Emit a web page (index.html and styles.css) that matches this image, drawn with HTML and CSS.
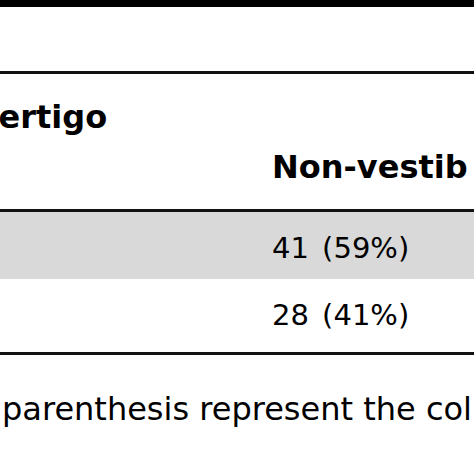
FILE: index.html
```html
<!DOCTYPE html>
<html lang="en">
<head>
    <meta charset="UTF-8">
    <meta name="viewport" content="width=device-width, initial-scale=1.0">
    <title>Table</title>
    <link rel="stylesheet" href="styles.css">
</head>
<body>
    <div class="tbl">
        <div class="tbl-top"></div>
        <div class="tbl-caption"></div>
        <div class="tbl-rule"></div>
        <div class="tbl-head">
            <div class="tbl-group">ertigo</div>
            <div class="tbl-row">
                <div class="tbl-label"></div>
                <div class="tbl-col">Non-vestib</div>
            </div>
        </div>
        <div class="tbl-rule"></div>
        <div class="tbl-row tbl-shaded">
            <div class="tbl-label"></div>
            <div class="tbl-cell">41 (59%)</div>
        </div>
        <div class="tbl-row tbl-plain">
            <div class="tbl-label"></div>
            <div class="tbl-cell">28 (41%)</div>
        </div>
        <div class="tbl-rule"></div>
        <div class="tbl-note">parenthesis represent the col</div>
    </div>
</body>
</html>
```

FILE: styles.css
```css
body {
    margin: 0;
    background: #fff;
    font-family: "DejaVu Sans", "Open Sans", sans-serif;
    color: #000;
}

.tbl {
    width: 474px;
    height: 474px;
    overflow: hidden;
}

.tbl-top {
    height: 7px;
    background: #000;
}

.tbl-caption {
    height: 64px;
}

.tbl-rule {
    height: 3px;
    background: #111;
}

.tbl-head {
    height: 135px;
    padding-top: 23px;
    box-sizing: border-box;
    font-weight: 700;
    font-size: 32px;
    line-height: 40px;
    white-space: nowrap;
}

.tbl-group {
    margin-left: -1.5px;
}

.tbl-row {
    display: flex;
    white-space: nowrap;
}

.tbl-head .tbl-row {
    margin-top: 10px;
}

.tbl-label {
    width: 272px;
    flex: none;
}

.tbl-cell {
    font-size: 29px;
    line-height: 40px;
    word-spacing: 4px;
}

.tbl-shaded {
    height: 67px;
    padding-top: 16px;
    box-sizing: border-box;
    background: #d9d9d9;
}

.tbl-plain {
    height: 73px;
    padding-top: 16px;
    box-sizing: border-box;
}

.tbl-note {
    padding-top: 32px;
    padding-left: 2px;
    font-size: 32px;
    line-height: 44px;
    white-space: nowrap;
}
```
